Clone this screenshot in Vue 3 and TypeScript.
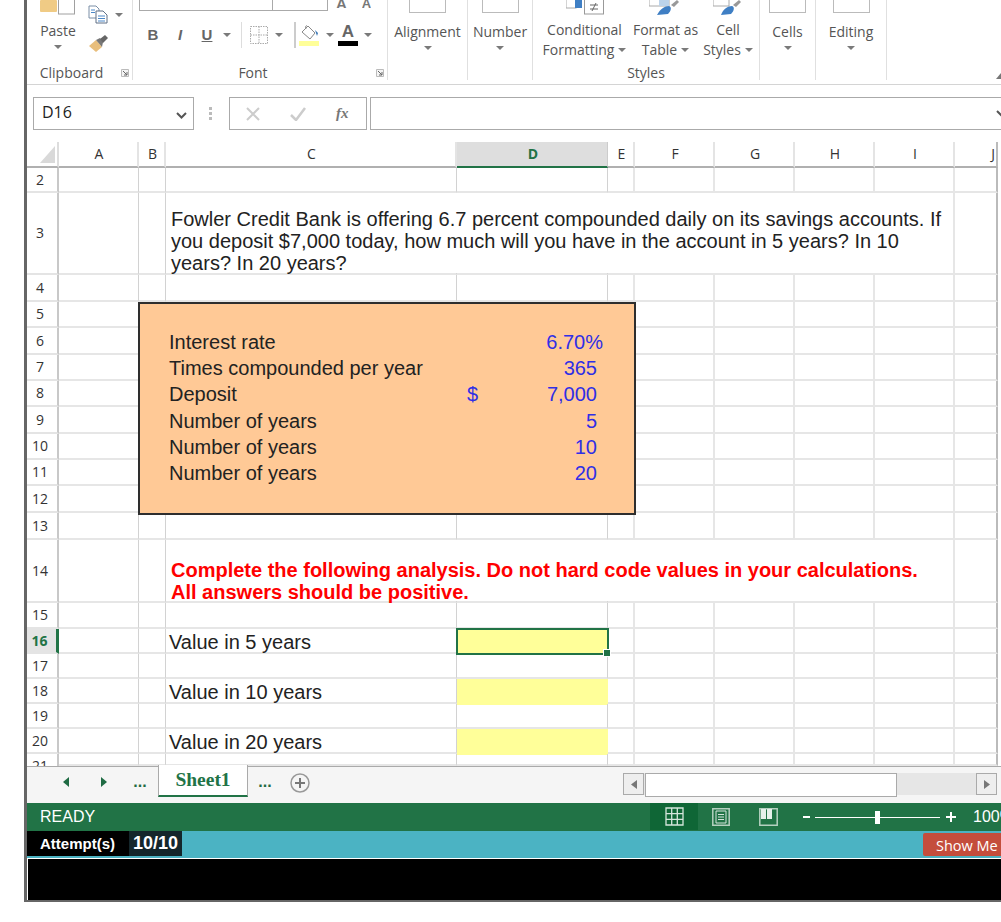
<script setup lang="ts">
interface Row { n: number; h: number }
const cols: string[] = ['A', 'B', 'C', 'D', 'E', 'F', 'G', 'H', 'I', 'J']
const colWidths: number[] = [80, 27, 291, 151, 27, 80, 80, 80, 80, 43]
const rows: Row[] = [
  { n: 2, h: 25 }, { n: 3, h: 82 }, { n: 4, h: 27 }, { n: 5, h: 26 }, { n: 6, h: 27 },
  { n: 7, h: 26 }, { n: 8, h: 26 }, { n: 9, h: 27 }, { n: 10, h: 26 }, { n: 11, h: 26 },
  { n: 12, h: 27 }, { n: 13, h: 27 }, { n: 14, h: 63 }, { n: 15, h: 26 }, { n: 16, h: 25 },
  { n: 17, h: 25 }, { n: 18, h: 25 }, { n: 19, h: 25 }, { n: 20, h: 25 }, { n: 21, h: 12 }
]
const gridColumns = '32px ' + colWidths.map((w) => w + 'px').join(' ')
const gridRows = '26px ' + rows.map((r) => r.h + 'px').join(' ')
const inputs: { label: string; value: string; row: number; wide?: boolean; dollar?: boolean }[] = [
  { label: 'Interest rate', value: '6.70%', row: 6, wide: true },
  { label: 'Times compounded per year', value: '365', row: 7 },
  { label: 'Deposit', value: '7,000', row: 8, dollar: true },
  { label: 'Number of years', value: '5', row: 9 },
  { label: 'Number of years', value: '10', row: 10 },
  { label: 'Number of years', value: '20', row: 11 }
]
const answers: { label: string; row: number }[] = [
  { label: 'Value in 5 years', row: 16 },
  { label: 'Value in 10 years', row: 18 },
  { label: 'Value in 20 years', row: 20 }
]
const isAnswerCell = (n: number, c: number): boolean => c === 3 && (n === 16 || n === 18 || n === 20)
</script>

<template>
  <div class="frame">
    <div class="ribbon">
      <div class="group clipboard">
        <div class="body clip-body">
          <div class="paste">
            <svg width="36" height="15" viewBox="0 0 36 15">
              <rect x="0" y="0" width="17" height="12" rx="1" fill="#f0cb85" />
              <rect x="18.5" y="-2" width="16" height="16" fill="#fff" stroke="#a0a0a0" />
            </svg>
            <span class="lbl paste-lbl">Paste</span>
            <i class="caret caret-paste"></i>
          </div>
          <div class="clip-tools">
            <div class="copy-row">
              <svg width="20" height="19" viewBox="0 0 20 19">
                <path d="M1 1h7l3 3v9H1z" fill="#fff" stroke="#7b8ea6" />
                <path d="M8 6h7l4 4v8H8z" fill="#fff" stroke="#5f6f85" />
                <path d="M10 11h7M10 13.500h7M10 16h7M3 5h4M3 7.500h4" stroke="#4c88c8" />
              </svg>
              <i class="caret copy-caret"></i>
            </div>
            <svg class="brush" width="21" height="18" viewBox="0 0 21 18">
              <path d="M1 11l7-6 6 7-6 5z" fill="#e8be7c" />
              <path d="M8 5l4-2 3 4-1 5z" fill="#777" />
              <path d="M12 4l5-4 3 3-5 5z" fill="#666" />
            </svg>
          </div>
        </div>
        <div class="glabel">Clipboard</div>
        <svg class="launcher" width="8" height="8" viewBox="0 0 8 8"><path d="M.5 7.500v-7h7v7z" fill="#f4f4f4" stroke="#bbb" /><path d="M2 2l4 4M6 3v3H3" fill="none" stroke="#666" /></svg>
      </div>

      <div class="group font">
        <div class="body font-body">
          <div class="font-top">
            <div class="font-name"></div>
            <div class="font-size"></div>
            <span class="grow-a first">A</span>
            <span class="grow-a second">A</span>
          </div>
          <div class="font-tools">
            <span class="fbtn bold">B</span>
            <span class="fbtn ital">I</span>
            <span class="fbtn under">U</span>
            <i class="caret t-caret"></i>
            <i class="tsep sep-a"></i>
            <svg class="bd-icon" width="18" height="18" viewBox="0 0 18 18">
              <path d="M.5.500h17v17H.5zM9 .5v17M.5 9h17" fill="none" stroke="#aaa" stroke-dasharray="1.500 1" />
            </svg>
            <i class="caret t-caret bd-caret"></i>
            <i class="tsep sep-b"></i>
            <div class="fill-ic">
              <svg width="20" height="16" viewBox="0 0 20 16">
                <path d="M9 1l7 7-5 6-8-7z" fill="#fff" stroke="#888" />
                <path d="M8 1c-1-1-2 1-1 3" fill="none" stroke="#888" />
                <path d="M16 5l3 3-1 3z" fill="#3a78b8" />
              </svg>
              <i class="fill-bar"></i>
            </div>
            <i class="caret t-caret fill-caret"></i>
            <div class="color-ic">
              <span>A</span>
              <i></i>
            </div>
            <i class="caret t-caret col-caret"></i>
          </div>
        </div>
        <div class="glabel">Font</div>
        <svg class="launcher" width="8" height="8" viewBox="0 0 8 8"><path d="M.5 7.500v-7h7v7z" fill="#f4f4f4" stroke="#bbb" /><path d="M2 2l4 4M6 3v3H3" fill="none" stroke="#666" /></svg>
      </div>

      <div class="group big w-align">
        <i class="stub"></i>
        <span class="lbl big-lbl">Alignment</span>
        <i class="caret big-caret"></i>
      </div>
      <div class="group big w-number">
        <i class="stub"></i>
        <span class="lbl big-lbl">Number</span>
        <i class="caret big-caret"></i>
      </div>

      <div class="group styles">
        <div class="body styles-body">
          <div class="sbtn s1">
            <svg class="s-ic" width="38" height="15" viewBox="0 0 38 15">
              <rect x="0" y="-2" width="10" height="10" fill="#fff" stroke="#aaa" />
              <rect x="9" y="0" width="7" height="8" fill="#3f7fc4" />
              <rect x="18.500" y="-2" width="19" height="16" fill="#fff" stroke="#999" />
              <path d="M24 5h8M24 9h8M30 3l-4 8" stroke="#666" fill="none" />
            </svg>
            <span class="lbl s-line">Conditional</span>
            <span class="lbl s-line">Formatting<i class="caret in-caret"></i></span>
          </div>
          <div class="sbtn s2">
            <svg class="s-ic" width="34" height="15" viewBox="0 0 34 15">
              <rect x="0" y="-3" width="20" height="9" fill="#fff" stroke="#aaa" />
              <rect x="10" y="-3" width="10" height="9" fill="#bcd3ea" />
              <path d="M8 15c3-6 8-9 12-9 3 1 2 5-1 8z" fill="#3f7fc4" />
              <path d="M22 5l6-5 2 2-5 5z" fill="#999" />
            </svg>
            <span class="lbl s-line">Format as</span>
            <span class="lbl s-line">Table<i class="caret in-caret"></i></span>
          </div>
          <div class="sbtn s3">
            <svg class="s-ic" width="30" height="15" viewBox="0 0 30 15">
              <rect x="0" y="-3" width="16" height="9" fill="#fff" stroke="#aaa" />
              <path d="M8 15c2-6 7-9 11-9 3 1 2 5-1 8z" fill="#3f7fc4" />
              <path d="M20 5l6-5 2 2-5 5z" fill="#999" />
            </svg>
            <span class="lbl s-line">Cell</span>
            <span class="lbl s-line">Styles<i class="caret in-caret"></i></span>
          </div>
        </div>
        <div class="glabel">Styles</div>
      </div>

      <div class="group big w-cells">
        <i class="stub"></i>
        <span class="lbl big-lbl">Cells</span>
        <i class="caret big-caret"></i>
      </div>
      <div class="group big w-editing">
        <i class="stub"></i>
        <span class="lbl big-lbl">Editing</span>
        <i class="caret big-caret"></i>
      </div>
      <svg class="collapse" width="5" height="6" viewBox="0 0 5 6"><path d="M5 0v6H0z" fill="#777" /></svg>
    </div>

    <div class="formula">
      <div class="namebox">
        <span>D16</span>
        <svg width="11" height="7" viewBox="0 0 11 7"><path d="M1 1l4.500 4.500L10 1" fill="none" stroke="#555" stroke-width="2" /></svg>
      </div>
      <svg class="dots" width="4" height="14" viewBox="0 0 4 14">
        <rect x="0" y="0" width="3" height="3" fill="#bbb" />
        <rect x="0" y="5" width="3" height="3" fill="#bbb" />
        <rect x="0" y="10" width="3" height="3" fill="#bbb" />
      </svg>
      <div class="fxbox">
        <svg width="14" height="14" viewBox="0 0 14 14"><path d="M1 1l12 12M13 1L1 13" stroke="#ccc" stroke-width="2" /></svg>
        <svg width="16" height="14" viewBox="0 0 16 14"><path d="M1 8l5 5L15 1" fill="none" stroke="#ccc" stroke-width="2.500" /></svg>
        <span class="fx">fx</span>
      </div>
      <div class="finput">
        <svg width="11" height="7" viewBox="0 0 11 7"><path d="M1 1l4.500 4.500L10 1" fill="none" stroke="#555" stroke-width="2" /></svg>
      </div>
    </div>

    <div class="sheet" :style="{ gridTemplateColumns: gridColumns, gridTemplateRows: gridRows }">
      <div class="corner">
        <svg width="15" height="17" viewBox="0 0 15 17"><path d="M15 0v17H0z" fill="#d9d9d9" /></svg>
      </div>
      <div
        v-for="(c, i) in cols"
        :key="c"
        class="colhead"
        :class="{ active: c === 'D', last: c === 'J' }"
        :style="{ gridRow: 1, gridColumn: i + 2 }"
      >{{ c }}</div>

      <template v-for="(r, ri) in rows" :key="r.n">
        <div
          class="rowhead"
          :class="{ active: r.n === 16, clipped: r.n === 21 }"
          :style="{ gridRow: ri + 2, gridColumn: 1 }"
        >{{ r.n }}</div>
        <div
          v-for="(c, ci) in cols"
          :key="c"
          class="cell"
          :class="{ dark: ci < 4, answer: isAnswerCell(r.n, ci), last: ci === 9 }"
          :style="{ gridRow: ri + 2, gridColumn: ci + 2 }"
        ></div>
      </template>

      <p class="para problem">Fowler Credit Bank is offering 6.7 percent compounded daily on its savings accounts. If<br />you deposit $7,000 today, how much will you have in the account in 5 years? In 10<br />years? In 20 years?</p>

      <div class="inputbox"></div>
      <template v-for="it in inputs" :key="it.row">
        <div class="txt in-label" :style="{ gridRow: it.row }">{{ it.label }}</div>
        <div class="txt in-val" :class="{ wide: it.wide }" :style="{ gridRow: it.row }">
          <span v-if="it.dollar" class="dollar">$</span>
          <span class="num">{{ it.value }}</span>
        </div>
      </template>

      <p class="para notice">Complete the following analysis. Do not hard code values in your calculations.<br />All answers should be positive.</p>

      <div
        v-for="a in answers"
        :key="a.row"
        class="txt ans-label"
        :style="{ gridRow: a.row }"
      >{{ a.label }}</div>

      <div class="selection"><i class="handle"></i></div>
    </div>

    <div class="tabbar">
      <svg class="nav nav-l" width="6" height="10" viewBox="0 0 6 10"><path d="M6 0v10L0 5z" fill="#1f6b43" /></svg>
      <svg class="nav nav-r" width="6" height="10" viewBox="0 0 6 10"><path d="M0 0v10l6-5z" fill="#1f6b43" /></svg>
      <span class="more more-a">...</span>
      <div class="tab">Sheet1</div>
      <span class="more more-b">...</span>
      <svg class="add" width="20" height="20" viewBox="0 0 20 20">
        <circle cx="10" cy="10" r="9" fill="#f5f5f5" stroke="#999" stroke-width="1.500" />
        <path d="M10 5v10M5 10h10" stroke="#777" stroke-width="2" />
      </svg>
      <div class="hscroll">
        <div class="sbtn-s"><svg width="6" height="9" viewBox="0 0 6 9"><path d="M6 0v9L0 4.500z" fill="#777" /></svg></div>
        <div class="thumb"></div>
        <div class="sbtn-s right"><svg width="6" height="9" viewBox="0 0 6 9"><path d="M0 0v9l6-4.500z" fill="#777" /></svg></div>
      </div>
    </div>

    <div class="status">
      <span class="ready">READY</span>
      <div class="view on">
        <svg width="19" height="19" viewBox="0 0 19 19">
          <path d="M1 1h17v17H1zM6.700 1v17M12.300 1v17M1 6.700h17M1 12.300h17" fill="none" stroke="#d5e6dc" stroke-width="1.300" />
        </svg>
      </div>
      <svg class="v-page" width="18" height="18" viewBox="0 0 18 18">
        <path d="M.8.800h16.400v16.400H.8z" fill="none" stroke="#b5d0c0" stroke-width="1.500" />
        <path d="M4 3h10v12H4z" fill="none" stroke="#d5e6dc" />
        <path d="M6 6.500h6M6 9h6M6 11.500h6" stroke="#d5e6dc" />
      </svg>
      <svg class="v-break" width="19" height="18" viewBox="0 0 19 18">
        <path d="M.8.800h17.400v16.400H.8z" fill="none" stroke="#b5d0c0" stroke-width="1.500" />
        <path d="M2 1h5v10H2zM8 1h5v10H8z" fill="#e6f0ea" />
      </svg>
      <i class="z-minus"></i>
      <div class="slider"><i></i></div>
      <svg class="z-plus" width="10" height="10" viewBox="0 0 10 10"><path d="M5 0v10M0 5h10" stroke="#fff" stroke-width="2" /></svg>
      <span class="zoom">100%</span>
    </div>

    <div class="attempts">
      <span class="att-l">Attempt(s)</span>
      <span class="att-n">10/10</span>
      <button class="show" type="button">Show Me</button>
    </div>
    <div class="blackbar"></div>
  </div>
</template>

<style>
html, body { margin: 0; background: #fff; overflow: hidden; }
</style>

<style scoped>
.frame {
  box-sizing: border-box;
  margin-left: 24px;
  width: 977px;
  height: 902px;
  border-left: 3px solid #666;
  border-bottom: 2px solid #666;
  display: flex;
  flex-direction: column;
  overflow: hidden;
  font-family: "Open Sans", "Noto Sans", sans-serif;
  color: #555;
}
i { display: block; font-style: normal; }

/* ribbon */
.ribbon {
  position: relative;
  height: 85px;
  flex: none;
  box-sizing: border-box;
  border-bottom: 1px solid #d4d4d4;
  display: flex;
  align-items: flex-start;
}
.group {
  position: relative;
  box-sizing: border-box;
  height: 80px;
  border-right: 1px solid #e0e0e0;
  display: flex;
  flex-direction: column;
  flex: none;
}
.body { height: 66px; }
.glabel {
  height: 14px;
  line-height: 14px;
  font-size: 14px;
  text-align: center;
  color: #555;
}
.lbl { font-size: 14px; color: #555; white-space: nowrap; }
.launcher { position: absolute; right: 3px; bottom: 3px; }
.caret {
  width: 0;
  height: 0;
  border-left: 4px solid transparent;
  border-right: 4px solid transparent;
  border-top: 4px solid #7a7a7a;
}
.clipboard { width: 106px; }
.clipboard .glabel { text-indent: -16px; }
.clip-body { display: flex; padding-left: 13px; }
.paste { width: 36px; display: flex; flex-direction: column; align-items: center; }
.paste-lbl { line-height: 18px; margin-top: 7px; }
.caret-paste { margin-top: 5px; }
.clip-tools { margin-left: 12px; padding-top: 5px; }
.copy-row { display: flex; align-items: center; }
.copy-caret { margin-left: 7px; }
.brush { display: block; margin-top: 11px; }

.font { width: 255px; }
.font .glabel { text-indent: -14px; }
.font-body { padding-left: 6px; }
.font-top { display: flex; height: 11px; }
.font-name { box-sizing: border-box; width: 134px; height: 11px; border: 1px solid #aaa; border-top: none; }
.font-size { box-sizing: border-box; width: 55px; height: 11px; border: 1px solid #aaa; border-top: none; border-left: none; }
.grow-a { font: bold 13px/8px "Liberation Sans", sans-serif; color: #777; height: 8px; overflow: hidden; }
.grow-a.first { margin-left: 8px; font-size: 15px; }
.grow-a.second { margin-left: 15px; }
.font-tools { display: flex; align-items: center; height: 24px; margin-top: 12px; }
.fbtn { text-align: center; font: 15px/20px "Liberation Sans", sans-serif; color: #666; }
.bold { width: 28px; font-weight: bold; }
.ital { width: 26px; font-style: italic; font-weight: bold; }
.under { width: 28px; font-weight: bold; text-decoration: underline; }
.t-caret { margin-left: 2px; }
.tsep { width: 1px; height: 26px; background: #ddd; }
.sep-a { margin-left: 10px; }
.bd-icon { margin-left: 8px; }
.bd-caret { margin-left: 7px; }
.sep-b { margin-left: 11px; width: 2px; background: #ccc; }
.fill-ic { margin-left: 3px; width: 20px; }
.fill-ic svg { display: block; }
.fill-bar { height: 5px; background: #ffff99; }
.fill-caret { margin-left: 7px; }
.color-ic { margin-left: 4px; width: 20px; text-align: center; }
.color-ic span { display: block; font: bold 17px/16px "Liberation Sans", sans-serif; color: #666; }
.color-ic i { height: 5px; background: #000; margin-top: 1px; }
.col-caret { margin-left: 6px; }

.big { align-items: center; }
.w-align { width: 80px; }
.w-number { width: 65px; }
.w-cells { width: 56px; }
.w-editing { width: 71px; }
.stub {
  box-sizing: border-box;
  width: 37px;
  height: 13px;
  border: 1px solid #bbb;
  border-top: none;
}
.big-lbl { line-height: 18px; margin-top: 10px; }
.big-caret { margin-top: 5px; }

.styles { width: 227px; }
.styles-body { display: flex; padding-left: 7px; }
.sbtn { display: flex; flex-direction: column; align-items: center; }
.s1 { width: 89px; }
.s2 { width: 71px; margin-left: 1px; }
.s3 { width: 54px; }
.s-ic { display: block; height: 15px; margin-bottom: 5px; }
.s-line { line-height: 20px; display: flex; align-items: center; }
.in-caret { margin-left: 4px; }
.collapse { position: absolute; right: 0; top: 73px; }

/* formula bar */
.formula {
  flex: none;
  display: flex;
  align-items: center;
  height: 33px;
  margin-top: 12px;
  margin-left: 6px;
}
.namebox {
  box-sizing: border-box;
  flex: none;
  width: 161px;
  height: 33px;
  border: 1px solid #aaa;
  display: flex;
  align-items: center;
  justify-content: space-between;
  padding: 0 6px 0 8px;
  font-size: 16px;
  color: #222;
}
.namebox span { margin-top: -4px; }
.namebox svg { margin-top: 3px; }
.dots { flex: none; margin-left: 15px; }
.fxbox {
  box-sizing: border-box;
  flex: none;
  margin-left: 16px;
  width: 138px;
  height: 33px;
  border: 1px solid #aaa;
  display: flex;
  align-items: center;
  gap: 30px;
  padding-left: 16px;
}
.fx { font: italic bold 15px "Liberation Serif", serif; color: #777; }
.finput {
  box-sizing: border-box;
  margin-left: 3px;
  flex: none;
  width: 640px;
  height: 33px;
  border: 1px solid #aaa;
  display: flex;
  align-items: center;
  padding-left: 625px;
}

/* sheet */
.sheet {
  display: grid;
  flex: none;
  margin-top: 12px;
  width: 971px;
  height: 624px;
  font-family: "Liberation Sans", sans-serif;
}
.corner {
  grid-row: 1;
  grid-column: 1;
  box-sizing: border-box;
  border-right: 2px solid #ddd;
  border-bottom: 2px solid #b0b0b0;
  padding: 4px 0 0 13px;
}
.corner svg { display: block; }
.colhead {
  box-sizing: border-box;
  border-right: 2px solid #e4e4e4;
  border-bottom: 2px solid #b0b0b0;
  text-align: center;
  padding-left: 2px;
  font: 14px/23px "Open Sans", sans-serif;
  color: #333;
}
.colhead.active {
  background: #dedede;
  color: #217346;
  font-weight: bold;
  border-right: 1px solid #ccc;
  border-bottom-color: #217346;
}
.colhead.last { text-align: right; padding-right: 1px; border-right: 2px solid #bbb; }
.rowhead {
  box-sizing: border-box;
  border-right: 2px solid #c8c8c8;
  border-bottom: 2px solid #e4e4e4;
  font: 14px/24px "Open Sans", sans-serif;
  color: #333;
  padding-right: 4px;
  display: flex;
  align-items: center;
  justify-content: center;
  overflow: hidden;
}
.rowhead.active {
  background: #e4e4e4;
  color: #217346;
  font-weight: bold;
  border-right: 3px solid #217346;
}
.rowhead.clipped { align-items: flex-start; border-bottom: none; }
.cell {
  box-sizing: border-box;
  border-right: 2px solid #e6e6e6;
  border-bottom: 2px solid #e6e6e6;
}
.cell.dark { border-right: 1px solid #d2d2d2; }
.cell.last { border-right: 2px solid #bbb; }
.cell.answer { background: #ffff99; border-right: none; border-bottom: none; margin-bottom: -1px; }

.para {
  margin: 0 2px 2px 0;
  box-sizing: border-box;
  grid-column: 4 / 11;
  display: block;
  background: #fff;
  font-size: 20px;
  line-height: 22px;
  white-space: nowrap;
  padding-left: 5px;
}
.problem { grid-row: 3; color: #222; padding-top: 15px; }
.notice { grid-row: 14; color: #ff0000; font-weight: bold; padding-top: 19px; }

.inputbox {
  grid-row: 5 / 13;
  grid-column: 3 / 7;
  box-sizing: border-box;
  margin: 0 -1px -2px -1px;
  background: #ffc996;
  border: 2px solid #2e2e2e;
}
.txt {
  font-size: 20px;
  white-space: nowrap;
  display: flex;
  align-items: center;
}
.in-label { grid-column: 4; padding: 1px 0 0 3px; color: #222; }
.in-val {
  grid-column: 5;
  color: #2f2fe6;
  justify-content: space-between;
  padding: 1px 11px 0 10px;
}
.in-val .num { margin-left: auto; }
.in-val.wide { padding-right: 5px; }
.ans-label { grid-column: 4; padding: 2px 0 0 3px; color: #222; }
.selection {
  grid-row: 16;
  grid-column: 5;
  position: relative;
  box-sizing: border-box;
  margin: -1px -1px 0 -1px;
  height: 27px;
  border: 2px solid #217346;
}
.handle {
  position: absolute;
  right: -4px;
  bottom: -4px;
  width: 6px;
  height: 6px;
  background: #217346;
  border: 1px solid #fff;
}

/* sheet tabs */
.tabbar {
  flex: none;
  box-sizing: border-box;
  height: 37px;
  background: #f5f5f5;
  border-top: 1.500px solid #aaa;
  display: flex;
  align-items: flex-start;
  position: relative;
}
.nav { flex: none; margin-top: 10px; }
.nav-l { margin-left: 36px; }
.nav-r { margin-left: 32px; }
.more {
  width: 14px;
  font: bold 16px/24px "Liberation Sans", sans-serif;
  color: #1f6b43;
  text-align: center;
  margin-top: 3px;
}
.more-a { margin-left: 26px; }
.more-b { margin-left: 10px; }
.tab {
  box-sizing: border-box;
  margin: -2px 0 0 11px;
  width: 90px;
  height: 32px;
  background: #fff;
  border-left: 1px solid #aaa;
  border-right: 1px solid #aaa;
  border-bottom: 2px solid #217346;
  text-align: center;
  font: bold 19.500px/30px "Liberation Serif", serif;
  color: #217346;
}
.add { flex: none; margin: 6px 0 0 18px; }
.hscroll {
  flex: none;
  margin: 6px 4px 0 auto;
  width: 374px;
  height: 22px;
  background: #e6e6e6;
  display: flex;
  align-items: flex-start;
}
.sbtn-s {
  box-sizing: border-box;
  width: 21px;
  height: 22px;
  border: 1px solid #aaa;
  background: #eee;
  display: flex;
  align-items: center;
  justify-content: center;
}
.sbtn-s.right { margin-left: auto; }
.thumb {
  box-sizing: border-box;
  margin-left: 1px;
  width: 252px;
  height: 24px;
  background: #fff;
  border: 1px solid #aaa;
}

/* status bar */
.status {
  flex: none;
  height: 28px;
  background: #217346;
  display: flex;
  align-items: center;
  color: #fff;
  font-family: "Liberation Sans", sans-serif;
  font-size: 16px;
  white-space: nowrap;
}
.status > * { flex: none; }
.ready { width: 610px; padding-left: 13px; }
.view.on {
  width: 48px;
  height: 27px;
  align-self: flex-start;
  background: #0f6636;
  display: flex;
  align-items: center;
  justify-content: center;
}
.v-page { margin-left: 14px; }
.v-break { margin-left: 29px; }
.z-minus { margin-left: 25px; width: 7px; height: 2px; background: #fff; }
.slider {
  position: relative;
  margin-left: 5px;
  width: 125px;
  height: 1px;
  background: #fff;
}
.slider i {
  position: absolute;
  left: 60px;
  top: -6px;
  width: 5px;
  height: 13px;
  background: #fff;
}
.z-plus { margin-left: 6px; }
.zoom { margin-left: 17px; font-family: "Liberation Sans", sans-serif; }

/* attempts */
.attempts {
  flex: none;
  height: 27px;
  background: #4bb3c3;
  display: flex;
  align-items: flex-start;
  font-family: "Liberation Sans", sans-serif;
  color: #fff;
  font-weight: bold;
  white-space: nowrap;
}
.att-l {
  box-sizing: border-box;
  width: 102px;
  height: 25px;
  background: #000;
  padding-left: 13px;
  font-size: 15px;
  line-height: 25px;
}
.att-n {
  box-sizing: border-box;
  width: 53px;
  height: 25px;
  background: #14262b;
  padding-left: 4px;
  font-size: 18px;
  line-height: 25px;
}
.show {
  margin: 2px -12px 0 auto;
  width: 90px;
  flex: none;
  height: 23px;
  border: none;
  border-radius: 2px;
  background: #c44d3c;
  color: #fff;
  font: 14.500px/25px "Open Sans", sans-serif;
  text-align: left;
  padding: 0 0 0 13px;
}
.blackbar {
  flex: 1;
  margin-left: 1px;
  border-top: 1px solid #fff;
  background: #000;
}
</style>
